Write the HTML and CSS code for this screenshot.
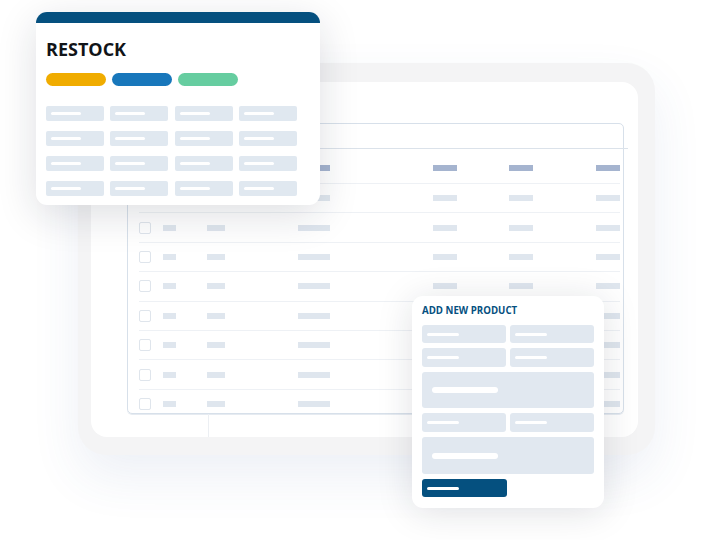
FILE: index.html
```html
<!DOCTYPE html>
<html>
<head>
<meta charset="utf-8">
<link rel="stylesheet" href="styles.css">
</head>
<body>
<div class="stage">
  <div class="tablet">
    <div class="screen">
      <div class="table">
        <div class="toolbar"></div>
        <div class="row head">
          <span></span><span></span><span></span>
          <span><i class="bar w32"></i></span>
          <span><i class="bar w24"></i></span>
          <span><i class="bar w24"></i></span>
          <span><i class="bar w24"></i></span>
        </div>
        <div class="row"><span><i class="box"></i></span><span><i class="bar w13"></i></span><span><i class="bar w18"></i></span><span><i class="bar w32"></i></span><span><i class="bar w24"></i></span><span><i class="bar w24"></i></span><span><i class="bar w24"></i></span></div>
        <div class="row"><span><i class="box"></i></span><span><i class="bar w13"></i></span><span><i class="bar w18"></i></span><span><i class="bar w32"></i></span><span><i class="bar w24"></i></span><span><i class="bar w24"></i></span><span><i class="bar w24"></i></span></div>
        <div class="row"><span><i class="box"></i></span><span><i class="bar w13"></i></span><span><i class="bar w18"></i></span><span><i class="bar w32"></i></span><span><i class="bar w24"></i></span><span><i class="bar w24"></i></span><span><i class="bar w24"></i></span></div>
        <div class="row"><span><i class="box"></i></span><span><i class="bar w13"></i></span><span><i class="bar w18"></i></span><span><i class="bar w32"></i></span><span><i class="bar w24"></i></span><span><i class="bar w24"></i></span><span><i class="bar w24"></i></span></div>
        <div class="row"><span><i class="box"></i></span><span><i class="bar w13"></i></span><span><i class="bar w18"></i></span><span><i class="bar w32"></i></span><span><i class="bar w24"></i></span><span><i class="bar w24"></i></span><span><i class="bar w24"></i></span></div>
        <div class="row"><span><i class="box"></i></span><span><i class="bar w13"></i></span><span><i class="bar w18"></i></span><span><i class="bar w32"></i></span><span><i class="bar w24"></i></span><span><i class="bar w24"></i></span><span><i class="bar w24"></i></span></div>
        <div class="row"><span><i class="box"></i></span><span><i class="bar w13"></i></span><span><i class="bar w18"></i></span><span><i class="bar w32"></i></span><span><i class="bar w24"></i></span><span><i class="bar w24"></i></span><span><i class="bar w24"></i></span></div>
        <div class="row last"><span><i class="box"></i></span><span><i class="bar w13"></i></span><span><i class="bar w18"></i></span><span><i class="bar w32"></i></span><span><i class="bar w24"></i></span><span><i class="bar w24"></i></span><span><i class="bar w24"></i></span></div>
      </div>
      <div class="below"></div>
    </div>
  </div>

  <div class="restock">
    <div class="restock-top"></div>
    <div class="restock-body">
      <h1 class="restock-title">RESTOCK</h1>
      <div class="pills">
        <span class="pill yellow"></span>
        <span class="pill blue"></span>
        <span class="pill green"></span>
      </div>
      <div class="cells">
        <span class="cell"><i></i></span><span class="cell"><i></i></span><span class="cell"><i></i></span><span class="cell"><i></i></span>
        <span class="cell"><i></i></span><span class="cell"><i></i></span><span class="cell"><i></i></span><span class="cell"><i></i></span>
        <span class="cell"><i></i></span><span class="cell"><i></i></span><span class="cell"><i></i></span><span class="cell"><i></i></span>
        <span class="cell"><i></i></span><span class="cell"><i></i></span><span class="cell"><i></i></span><span class="cell"><i></i></span>
      </div>
    </div>
  </div>

  <div class="product">
    <h2 class="product-title">ADD NEW PRODUCT</h2>
    <div class="form">
      <span class="field"><i></i></span>
      <span class="field"><i></i></span>
      <span class="field"><i></i></span>
      <span class="field"><i></i></span>
      <span class="field wide"><i></i></span>
      <span class="field"><i></i></span>
      <span class="field"><i></i></span>
      <span class="field wide"><i></i></span>
      <span class="button"><i></i></span>
    </div>
  </div>
</div>
</body>
</html>
```
FILE: styles.css
```css
* { box-sizing: border-box; }
html, body { margin: 0; padding: 0; background: #ffffff; }
body { width: 704px; height: 540px; overflow: hidden; font-family: "Open Sans", "Liberation Sans", sans-serif; }

.stage { position: relative; width: 704px; height: 540px; padding: 63px 0 0 78px; }

.tablet {
  width: 577px;
  height: 392px;
  background: #f4f4f5;
  border-radius: 28px;
  padding: 19px 17px 18px 13px;
  box-shadow: 0 22px 50px rgba(60, 90, 150, 0.09);
}
.screen {
  height: 100%;
  background: #ffffff;
  border-radius: 16px;
  padding: 41px 14px 0 36px;
  display: flex;
  flex-direction: column;
}

.table {
  height: 291px;
  flex: none;
  border: 1px solid #d7e0ea;
  border-radius: 5px;
  box-shadow: 0 1px 0 #e6ebf1;
  display: flex;
  flex-direction: column;
}
.toolbar {
  height: 25px;
  flex: none;
  border-bottom: 1px solid #dbe2ea;
  margin: 0 -5px 0 -1px;
}
.row {
  flex: none;
  height: 29.4px;
  margin: 0 3px 0 11px;
  border-bottom: 1px solid #eef1f5;
  display: grid;
  grid-template-columns: 24px 44px 91px 135px 76px 87px 24px;
  align-items: center;
}
.row.head { height: 35px; padding-top: 3px; }
.row.last { border-bottom: none; }
.row span { display: flex; align-items: center; }

.bar { display: block; height: 6px; background: #dfe6ee; }
.head .bar { background: #a5b4cf; }
.w13 { width: 13px; }
.w18 { width: 18px; }
.w24 { width: 24px; }
.w32 { width: 32px; }
.box { display: block; width: 12px; height: 12px; border: 1px solid #dfe5ec; border-radius: 2px; background: #fff; }

.below {
  flex: 1;
  margin-left: 81px;
  border-left: 1px solid #eceff3;
}

/* Restock card */
.restock {
  position: absolute;
  left: 36px;
  top: 12px;
  width: 284px;
  height: 193px;
  background: #ffffff;
  border-radius: 11px;
  overflow: hidden;
  box-shadow: 0 10px 40px rgba(20, 30, 50, 0.14);
}
.restock-top { height: 11px; background: #05507f; }
.restock-body { padding: 14px 0 0 10px; }
.restock-title {
  margin: 0;
  font-size: 18px;
  line-height: 24px;
  font-weight: 700;
  color: #111418;
}
.pills { display: flex; gap: 6.5px; margin-top: 12px; }
.pill { display: block; width: 59.5px; height: 13px; border-radius: 7px; }
.yellow { background: #f0ac00; }
.blue { background: #1877bb; }
.green { background: #66cda0; }

.cells {
  margin-top: 20px;
  display: grid;
  grid-template-columns: repeat(4, 58px);
  grid-auto-rows: 15px;
  gap: 10px 6.33px;
}
.cell {
  display: flex;
  align-items: center;
  padding-left: 5px;
  background: #e0e8f0;
  border-radius: 2px;
}
.cell i { display: block; width: 30px; height: 3px; background: #ffffff; border-radius: 2px; }

/* Add product card */
.product {
  position: absolute;
  left: 412px;
  top: 296px;
  width: 192px;
  height: 212px;
  background: #ffffff;
  border-radius: 11px;
  padding: 8px 10px 0 10px;
  box-shadow: 0 4px 36px rgba(20, 30, 50, 0.13);
}
.product-title {
  margin: 0;
  font-size: 9.7px;
  line-height: 14px;
  font-weight: 700;
  color: #05507f;
}
.form {
  margin-top: 7px;
  display: grid;
  grid-template-columns: 84px 84px;
  grid-template-rows: 18px 19px 36px 19px 37px 18px;
  gap: 5px 4px;
}
.field {
  display: flex;
  align-items: center;
  padding-left: 5px;
  background: #e1e8f0;
  border-radius: 3px;
}
.field i { display: block; width: 32px; height: 3px; background: #ffffff; border-radius: 2px; }
.field.wide { grid-column: 1 / span 2; padding-left: 10px; }
.field.wide i { width: 66px; height: 6px; border-radius: 3px; }
.button {
  display: flex;
  align-items: center;
  padding-left: 5px;
  width: 85px;
  background: #05507f;
  border-radius: 3px;
}
.button i { display: block; width: 32px; height: 3px; background: #ffffff; border-radius: 2px; }
```
